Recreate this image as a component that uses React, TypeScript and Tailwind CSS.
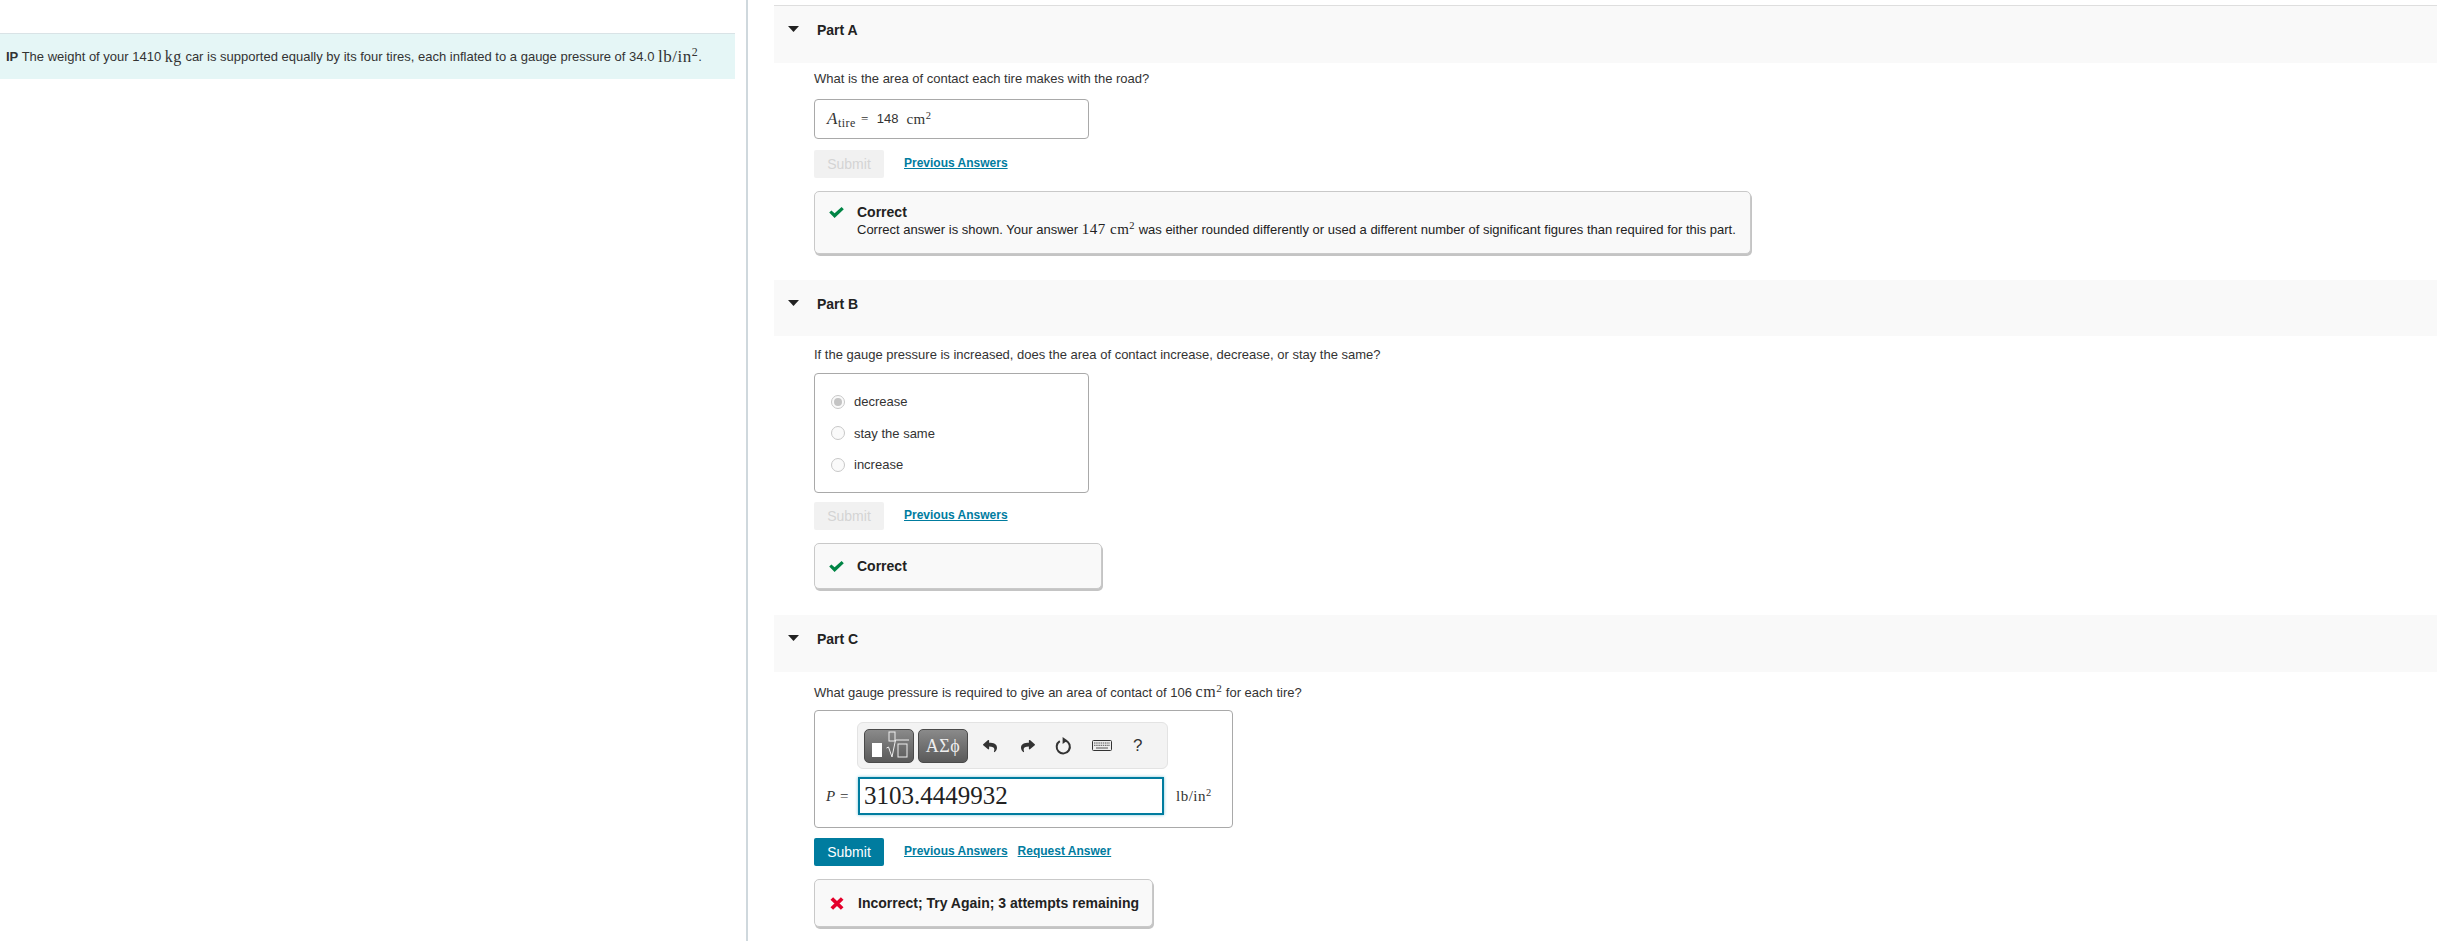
import { FaReply, FaShare } from "react-icons/fa";

const math = "font-['Liberation_Serif',serif] tracking-[0.5px]";

const Caret = () => (
  <svg width="11" height="6" viewBox="0 0 11 6" className="shrink-0">
    <path d="M0 0H11L5.5 6Z" fill="#222" />
  </svg>
);

const Check = ({ className = "" }: { className?: string }) => (
  <svg width="15" height="11" viewBox="0 0 15 11" className={className}>
    <path d="M0.2 5.4L2.4 3.4L5.6 6.2L12.6 0L14.8 2.2L5.6 11Z" fill="#008545" />
  </svg>
);

const Cross = () => (
  <svg width="14" height="13" viewBox="0 0 14 13">
    <path d="M1.8 1.5L12.2 11.5M12.2 1.5L1.8 11.5" fill="none" stroke="#e4002b" strokeWidth="3.8" />
  </svg>
);

const Sup = ({ children }: { children: React.ReactNode }) => (
  <sup className="text-[70%] leading-none relative top-[1px] align-super">{children}</sup>
);

const Header = ({ title, h = "h-[57px]" }: { title: string; h?: string }) => (
  <div className={`${h} bg-[#f9f9f9] flex items-start pl-[14px] pt-[16px]`}>
    <span className="mt-[4px]">
      <Caret />
    </span>
    <h2 className="ml-[18px] text-[14px] leading-[16px] font-bold text-[#222]">{title}</h2>
  </div>
);

const Buttons = ({ active = false, request = false }: { active?: boolean; request?: boolean }) => (
  <div className="flex items-center">
    <button
      className={`w-[70px] h-[28px] rounded-[2px] text-[14px] ${
        active ? "bg-[#007c9f] text-white" : "bg-[#f1f1f1] text-[#d4d4d4]"
      }`}
    >
      Submit
    </button>
    <a className="ml-[20px] -mt-[2px] text-[12px] font-bold text-[#007c9f] underline">Previous Answers</a>
    {request && <a className="ml-[10px] -mt-[2px] text-[12px] font-bold text-[#007c9f] underline">Request Answer</a>}
  </div>
);

const Radio = ({ label, checked = false }: { label: string; checked?: boolean }) => (
  <div className="h-[31.5px] flex items-center pl-[16px]">
    <span className="w-[14px] h-[14px] rounded-full border border-[#c8c8c8] bg-[#fafafa] flex items-center justify-center">
      {checked && <span className="w-[8px] h-[8px] rounded-full bg-[#c4c4c4]" />}
    </span>
    <span className="ml-[9px] text-[13px] text-[#333]">{label}</span>
  </div>
);

const Feedback = ({ className, children }: { className: string; children: React.ReactNode }) => (
  <div
    className={`rounded-[5px] border border-[#c9c9c9] bg-[#f9f9f9] shadow-[1px_2px_0_#c4c4c4] ${className}`}
  >
    {children}
  </div>
);

const Toolbar = () => (
  <div className="ml-[42px] w-[311px] h-[47px] rounded-[6px] border border-[#e3e3e3] bg-[#f3f3f3] flex items-center pl-[6px]">
    <button className="w-[50px] h-[34px] rounded-[5px] border border-[#4a4a4a] bg-gradient-to-b from-[#8a8a8a] to-[#5a5a5a] flex items-center justify-center">
      <svg width="48" height="32" viewBox="0 0 48 32">
        <rect x="7" y="13" width="10" height="14" fill="#fff" />
        <rect x="24" y="2" width="6" height="9" fill="none" stroke="#eee" />
        <path d="M21.5 18L23.5 17L27 27L30.5 10H44" fill="none" stroke="#eee" strokeWidth="1" />
        <rect x="33" y="14" width="9" height="13" fill="none" stroke="#eee" />
      </svg>
    </button>
    <button
      className={`ml-[4px] w-[50px] h-[34px] rounded-[5px] border border-[#4a4a4a] bg-gradient-to-b from-[#8a8a8a] to-[#5a5a5a] text-[#eee] text-[18px] leading-none ${math}`}
    >
      ΑΣϕ
    </button>
    <FaReply className="ml-[15px] text-[#333] text-[14px]" />
    <FaShare className="ml-[24px] text-[#333] text-[14px]" />
    <svg width="17" height="18" viewBox="0 0 17 18" className="ml-[20px]">
      <path d="M10.5 3.6A6.6 6.6 0 1 1 4.8 4.2" fill="none" stroke="#333" strokeWidth="2" />
      <path d="M7.6 0L12.6 3.6L7.6 7Z" fill="#333" />
    </svg>
    <svg width="20" height="11" viewBox="0 0 20 11" className="ml-[20px]">
      <rect x="0.5" y="0.5" width="19" height="10" rx="1" fill="#eee" stroke="#333" />
      <path d="M2 3H18M2 5.3H18" stroke="#555" strokeWidth="1" strokeDasharray="1.5 0.7" />
      <path d="M4 8H16" stroke="#555" />
    </svg>
    <span className="ml-[21px] text-[17px] text-[#333]">?</span>
  </div>
);

export default function App() {
  return (
    <main className="h-[941px] w-[2437px] overflow-hidden flex bg-white font-['Liberation_Sans',Arial,sans-serif] text-[#333]">
      <aside className="w-[748px] shrink-0 border-r-2 border-[#cfd8dd] pt-[33px]">
        <div className="w-[735px] h-[46px] border-t border-[#d9e3e6] bg-[#e5f6f6] flex items-center pl-[6px] text-[13px] whitespace-pre">
          <b>IP</b> The weight of your 1410 <span className={`${math} text-[16px]`}>kg</span> car is supported equally by its four tires, each inflated to a gauge pressure of 34.0{" "}
          <span className={`${math} text-[17px]`}>
            lb/in<Sup>2</Sup>
          </span>{" "}
          .
        </div>
      </aside>

      <section className="flex-1 pl-[26px] pt-[5px]">
        <div className="border-t border-[#dedede]">
          <Header title="Part A" />
        </div>
        <div className="pl-[40px]">
          <p className="mt-[7px] text-[13px] leading-[18px]">What is the area of contact each tire makes with the road?</p>
          <div className="mt-[11px] w-[275px] h-[40px] rounded-[4px] border border-[#a9a9a9] flex items-center pl-[12px] text-[13px]">
            <span className={`${math} text-[17px]`}>
              <i>A</i>
              <span className="text-[12px] relative top-[3px]">tire</span>
            </span>
            <span className={`ml-[5px] ${math}`}>=</span>
            <span className="ml-[8px]">148</span>
            <span className={`ml-[8px] ${math} text-[15px]`}>
              cm<Sup>2</Sup>
            </span>
          </div>
          <div className="mt-[11px]">
            <Buttons />
          </div>
          <Feedback className="mt-[13px] w-[937px] h-[63px] relative pl-[42px] pt-[12px] leading-[17px] whitespace-pre">
            <span className="absolute left-[14px] top-[15px]">
              <Check />
            </span>
            <div className="text-[14px] font-bold text-[#222]">Correct</div>
            <div className="-mt-[1px] text-[13px] text-[#222]">
              Correct answer is shown. Your answer <span className={`${math} text-[15px]`}>147 cm<Sup>2</Sup></span> was either rounded differently or used a different number of significant figures than required for this part.
            </div>
          </Feedback>
        </div>

        <div className="mt-[26px]">
          <Header title="Part B" h="h-[56px]" />
        </div>
        <div className="pl-[40px]">
          <p className="mt-[10px] text-[13px] leading-[18px]">If the gauge pressure is increased, does the area of contact increase, decrease, or stay the same?</p>
          <div className="mt-[9px] w-[275px] h-[120px] rounded-[4px] border border-[#a9a9a9] pt-[12px]">
            <Radio label="decrease" checked />
            <Radio label="stay the same" />
            <Radio label="increase" />
          </div>
          <div className="mt-[9px]">
            <Buttons />
          </div>
          <Feedback className="mt-[13px] w-[288px] h-[46px] flex items-center pl-[14px]">
            <Check />
            <span className="ml-[13px] text-[14px] font-bold text-[#222]">Correct</span>
          </Feedback>
        </div>

        <div className="mt-[26px]">
          <Header title="Part C" />
        </div>
        <div className="pl-[40px]">
          <p className="mt-[10px] h-[18px] text-[13px] leading-[18px] whitespace-pre">
            What gauge pressure is required to give an area of contact of 106 <span className={`${math} text-[16px]`}>cm<Sup>2</Sup></span> for each tire?
          </p>
          <div className="mt-[10px] w-[419px] h-[118px] rounded-[4px] border border-[#a9a9a9] pt-[11px]">
            <Toolbar />
            <div className="mt-[8px] flex items-center">
              <span className={`ml-[11px] w-[32px] text-[15px] ${math}`}>
                <i>P</i> =
              </span>
              <div className="w-[306px] h-[38px] border-2 border-[#007c9f] shadow-[0_0_3px_#7cc4d8] pl-[4px] text-[25px] leading-[34px] text-[#222] font-['Liberation_Serif',serif]">
                3103.4449932
              </div>
              <span className={`ml-[12px] text-[15px] ${math}`}>
                lb/in<Sup>2</Sup>
              </span>
            </div>
          </div>
          <div className="mt-[10px]">
            <Buttons active request />
          </div>
          <Feedback className="mt-[13px] w-[339px] h-[48px] flex items-center pl-[15px]">
            <Cross />
            <span className="ml-[14px] text-[14px] font-bold text-[#222]">Incorrect; Try Again; 3 attempts remaining</span>
          </Feedback>
        </div>
      </section>
    </main>
  );
}
